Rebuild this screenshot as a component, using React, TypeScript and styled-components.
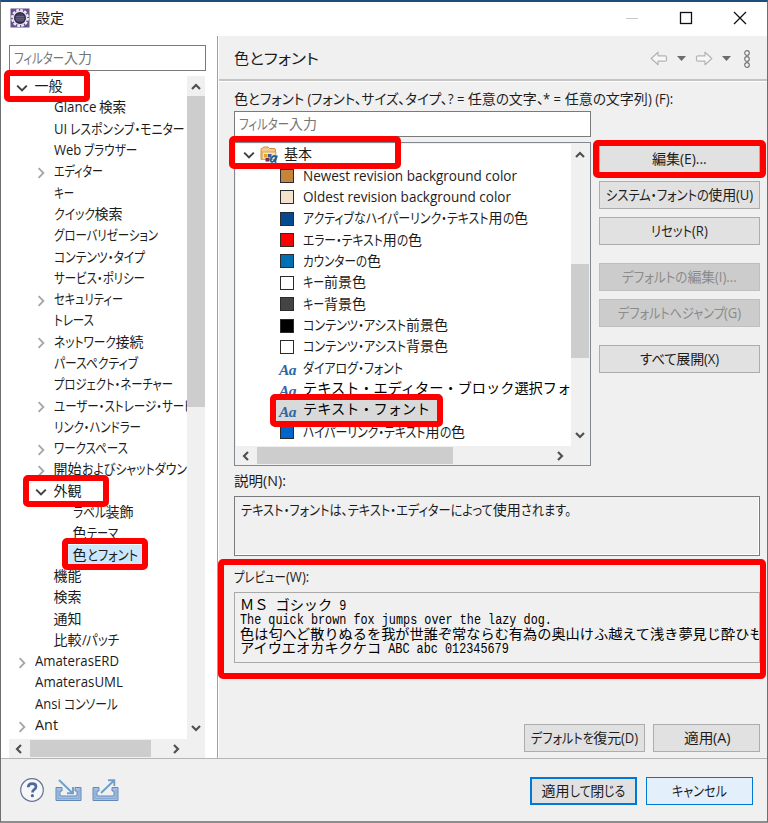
import React, { useLayoutEffect, useRef } from "react";
import styled, { createGlobalStyle, css } from "styled-components";

const Global = createGlobalStyle`
  * { box-sizing: border-box; }
  body { margin: 0; background: #fff; }
`;

const uiFont = `"Open Sans", "Noto Sans CJK JP", sans-serif`;

/* ---------- text ---------- */

const Line = styled.span<{ $size?: number }>`
  display: inline-flex;
  flex: none;
  white-space: pre;
  font-size: ${(p) => p.$size ?? 14}px;
  line-height: 20px;
  margin-bottom: 1px;
  font-feature-settings: "palt";
`;
const Run = styled.span`
  display: block;
  flex: none;
`;
const RunInk = styled.span<{ $latin: boolean }>`
  display: inline-block;
  transform-origin: 0 50%;
  font-size: ${(p) => (p.$latin ? "0.98em" : "1em")};
`;

function Text({ children, w, size }: { children: string; w: number; size?: number }) {
  const ref = useRef<HTMLSpanElement>(null);
  const parts = children.match(/[\u3000-\u30ff]+|[\u0000-\u024f]+|[^\u3000-\u30ff\u0000-\u024f]+/g) ?? [];
  useLayoutEffect(() => {
    const runs = Array.from(ref.current!.children) as HTMLElement[];
    const inks = runs.map((r) => r.firstElementChild as HTMLElement);
    inks.forEach((k) => (k.style.transform = "none"));
    const isKana = parts.map((p) => /^[\u3000-\u30ff]/.test(p));
    const some = isKana.some(Boolean);
    const natural = inks.map((k) => k.getBoundingClientRect().width);
    // Latin beside kana is set slightly condensed
    const base = parts.map((p) => (some && /^[\u0000-\u024f]/.test(p) ? 0.95 : 1));
    const widths = natural.map((x, i) => x * base[i]);
    const flexible = widths.reduce((a, x, i) => a + (!some || isKana[i] ? x : 0), 0);
    const fixed = widths.reduce((a, x) => a + x, 0) - flexible;
    const s = (w - fixed) / flexible;
    runs.forEach((r, i) => {
      const k = !some || isKana[i] ? s : base[i];
      r.style.width = natural[i] * k + "px";
      inks[i].style.transform = `scaleX(${k})`;
    });
  }, [children, w, size]);
  return (
    <Line ref={ref} $size={size}>
      {parts.map((p, i) => (
        <Run key={i}>
          <RunInk $latin={/^[\u0000-\u024f]/.test(p)}>{p}</RunInk>
        </Run>
      ))}
    </Line>
  );
}

/* ---------- window frame ---------- */

const Desktop = styled.div`
  position: relative;
  width: 768px;
  height: 823px;
  overflow: hidden;
  background: #fff;
  border-top: 2px solid #1f4c7c;
  border-left: 1px solid #6f6f6f;
  border-right: 1px solid #6a6f78;
  border-bottom: 2px solid #8d8d8d;
  display: flex;
  flex-direction: column;
  font-family: ${uiFont};
  color: #1c1c1c;
`;
const TitleBar = styled.header`
  flex: none;
  height: 34px;
  display: flex;
  align-items: center;
  padding: 0 20px 2px 9px;
`;
const Caption = styled.div`
  flex: 1;
  padding: 1px 0 0 6px;
  display: flex;
`;
const WindowButtons = styled.div`
  display: flex;
  align-items: center;
  gap: 40px;
`;
const Body = styled.div`
  flex: none;
  height: 722px;
  display: flex;
`;

/* ---------- left side ---------- */

const Side = styled.aside`
  width: 217px;
  flex: none;
  padding: 9px 0 0 8px;
  border-right: 1px solid #a0a0a0;
`;
const Filter = styled.div<{ $w: number }>`
  width: ${(p) => p.$w}px;
  height: 26px;
  border: 1px solid #7a7a7a;
  background: #fff;
  display: flex;
  align-items: center;
  padding: 0 0 0 4px;
  color: #767676;
`;
const Scroller = styled.div<{ $w: number; $h: number }>`
  width: ${(p) => p.$w}px;
  height: ${(p) => p.$h}px;
  display: grid;
  grid-template-columns: minmax(0, 1fr) 18px;
  grid-template-rows: minmax(0, 1fr) 19px;
  background: #f0f0f0;
`;
const SideTree = styled.div`
  margin-top: 5px;
`;
const Rows = styled.div`
  background: #fff;
  overflow: hidden;
`;
const TreeRow = styled.div<{ $depth: number }>`
  height: 21.3px;
  display: flex;
  align-items: center;
  padding-left: ${(p) => 4.5 + p.$depth * 19}px;
`;
const Twisty = styled.span`
  width: 21px;
  flex: none;
  display: flex;
  align-items: center;
  padding: 2px 0 0 2px;
`;
const Picked = styled.span<{ $on?: boolean }>`
  display: flex;
  align-items: center;
  height: 21px;
  ${(p) =>
    p.$on &&
    css`
      background: #cce8ff;
      margin-left: -5px;
      padding: 0 5px;
    `}
`;
const VBar = styled.div<{ $before: number; $thumb: number }>`
  display: flex;
  flex-direction: column;
  align-items: center;
  justify-content: space-between;
  padding: 6px 0;
  background: linear-gradient(#cdcdcd, #cdcdcd) 0 ${(p) => p.$before}px / 18px ${(p) => p.$thumb}px no-repeat #f0f0f0;
`;
const HBar = styled.div<{ $before: number; $thumb: number; $pad: number }>`
  display: flex;
  align-items: center;
  justify-content: space-between;
  padding: 0 ${(p) => p.$pad}px 0 5px;
  background: linear-gradient(#cdcdcd, #cdcdcd) ${(p) => p.$before}px 1px / ${(p) => p.$thumb}px 17px no-repeat #f0f0f0;
`;

type Dir = "up" | "down" | "left" | "right";
const turn: Record<Dir, number> = { down: 0, left: 90, up: 180, right: 270 };
function Chevron({ dir, color = "#505050", size = 10, sw = 2.2 }: { dir: Dir; color?: string; size?: number; sw?: number }) {
  return (
    <svg width={size} height={size} viewBox="0 0 10 10">
      <path d="M1 3 L5 7 L9 3" transform={`rotate(${turn[dir]} 5 5)`} fill="none" stroke={color} strokeWidth={sw} />
    </svg>
  );
}

/* ---------- right side ---------- */

const Page = styled.main`
  flex: 1;
  min-width: 0;
  margin-left: 1px;
  background: #f0f0f0;
  display: flex;
  flex-direction: column;
`;
const PageHead = styled.div`
  flex: none;
  height: 45px;
  border-bottom: 2px solid #c4c4c4;
  box-shadow: 0 1px #fff;
  display: flex;
  align-items: center;
  justify-content: space-between;
  padding: 2px 16px 0 15px;
`;
const PageBody = styled.div`
  padding: 6px 0 0 15px;
`;
const Label = styled.div<{ $h: number; $drop?: number }>`
  height: ${(p) => p.$h}px;
  padding-top: ${(p) => p.$drop ?? 0}px;
  display: flex;
  align-items: center;
`;
const Split = styled.div`
  display: flex;
  gap: 8px;
  height: 330px;
`;
const ColorBox = styled.div`
  margin-top: 5px;
  width: 357px;
  height: 324px;
  border: 1px solid #828790;
  padding: 1px;
`;
const ColorRow = styled.div`
  height: 21.36px;
  display: flex;
  align-items: center;
  padding-left: 43px;
`;
const IconCell = styled.span`
  width: 24px;
  flex: none;
  display: flex;
  align-items: center;
`;
const RootRow = styled(ColorRow)`
  padding-left: 7px;
  gap: 5px;
`;
const Swatch = styled.span<{ $c: string }>`
  width: 14px;
  height: 14px;
  margin-left: 1px;
  border: 1.5px solid #2b2b2b;
  background: ${(p) => p.$c};
`;
const Highlight = styled.span<{ $on?: boolean }>`
  height: 21px;
  display: flex;
  align-items: center;
  flex: none;
  ${(p) =>
    p.$on &&
    css`
      background: #d9d9d9;
      margin-left: -4px;
      padding: 0 8px 0 4px;
    `}
`;
const gothic = css`
  font-family: "Noto Sans CJK JP", sans-serif;
  font-feature-settings: normal;
  font-size: 14.2px;
  line-height: 14.3px;
  white-space: pre;
  color: #000;
`;
const Gothic = styled.span`
  ${gothic}
  padding-bottom: 5px;
`;
const ButtonColumn = styled.div`
  display: flex;
  flex-direction: column;
  gap: 8px;
  padding-top: 8px;
`;
const Button = styled.button<{ $w: number; $kind?: "disabled" | "default" | "hot"; $gap?: number }>`
  width: ${(p) => p.$w}px;
  height: 28px;
  flex: none;
  margin: ${(p) => p.$gap ?? 0}px 0 0;
  padding: 0;
  display: flex;
  align-items: center;
  justify-content: center;
  font-family: inherit;
  color: #1c1c1c;
  background: #e1e1e1;
  border: 1px solid #adadad;
  ${(p) => p.$kind === "disabled" && css`background: #cccccc; border-color: #bfbfbf; color: #8b8b8b;`}
  ${(p) => p.$kind === "default" && css`border: 2px solid #0078d7;`}
  ${(p) => p.$kind === "hot" && css`border-color: #0078d7; background: #e3f0fb;`}
`;
const Description = styled.div`
  width: 526px;
  height: 60px;
  border: 1px solid #7a7a7a;
  box-shadow: inset -1px -1px #fff;
  padding: 1px 6px;
`;
const Preview = styled.div`
  width: 526px;
  height: 71px;
  border: 1px solid #a9a9a9;
  padding: 4px 0 0 5px;
  overflow: hidden;
  display: flex;
  flex-direction: column;
`;
const PreviewLine = styled.div`
  ${gothic}
  flex: none;
  height: 14.4px;
`;
/* Half-width cells: tall, narrow monospace */
const Half = styled.span`
  font-family: "Liberation Mono", monospace;
  font-size: 11.82px;
  line-height: 12px;
  display: inline-block;
  transform: scaleY(1.18);
  transform-origin: 0 76%;
`;
const PageButtons = styled.div`
  display: flex;
  gap: 8px;
  justify-content: flex-end;
  margin-top: 61px;
  padding-right: 7px;
`;
const Footer = styled.footer`
  flex: 1;
  border-top: 1px solid #b5b5b5;
  background: #f0f0f0;
  display: flex;
  align-items: center;
  justify-content: space-between;
  padding: 2px 14px 0 18px;
`;
const Group = styled.div<{ $gap: number }>`
  display: flex;
  align-items: center;
  gap: ${(p) => p.$gap}px;
`;
const FooterIcons = styled(Group)`
  margin-bottom: 2px;
`;
const MenuDots = styled.span`
  display: flex;
  padding-left: 3px;
`;

/* Red frame laid over the dialog */
const Callout = styled.div<{ $x: number; $y: number; $w: number; $h: number }>`
  position: absolute;
  left: ${(p) => p.$x - 1}px;
  top: ${(p) => p.$y - 2}px;
  width: ${(p) => p.$w}px;
  height: ${(p) => p.$h}px;
  border: 6px solid #ff0000;
  border-radius: 5px;
  pointer-events: none;
`;

/* ---------- icons ---------- */

const AppIcon = () => (
  <svg width="20" height="20" viewBox="0 0 20 20">
    <rect x=".5" y=".5" width="19" height="19" fill="#65518f" />
    <circle cx="10" cy="10" r="7.7" fill="none" stroke="#efebf5" strokeWidth="2.6" strokeDasharray="2.7 1.33" />
    <circle cx="10" cy="10" r="6.6" fill="#29263f" stroke="#e6e2ee" strokeWidth="1.2" />
    <circle cx="10" cy="10" r="4.7" fill="#45415d" />
    <path d="M5.7 8.5h8.6M5.4 10.3h9.2M5.8 12.1h8.4" stroke="#777391" strokeWidth=".7" />
  </svg>
);
const FolderIcon = () => (
  <svg width="19" height="18" viewBox="0 0 19 18">
    <path d="M1 13.5V3.5Q1 2 2.5 2L4 1h4l1.5 1.5H14Q15.5 2.5 15.5 4v9.5Z" fill="#f3c98b" stroke="#c98f45" />
    <path d="M2.2 13.5V6H16L15 13.5Z" fill="#fbe2b5" stroke="#d9a45c" />
    <path d="M4 8h3.5v3.5H4z" fill="#e9a520" />
    <path d="M8 8h3.5v3.5H8z" fill="#3f5d94" />
    <path d="M5.5 12h4v3.5h-4z" fill="#7f2d3f" />
    <path d="M17 9.5 15.2 15.4q-.2 1 1.2.6M16.2 11.2q-1-1.8-3.2-.8-2.3 1.4-2.3 4 .3 2 2.2 1.3 1.6-.7 2.6-3" fill="none" stroke="#1d5fa0" strokeWidth="1.8" />
  </svg>
);
const FontGlyph = styled.span`
  font: italic bold 15.5px/16px "Liberation Serif", serif;
  color: #2f66a3;
  letter-spacing: -0.6px;
  padding-top: 3px;
`;
const NavArrow = ({ flip }: { flip?: boolean }) => (
  <svg width="18" height="15" viewBox="0 0 18 15">
    <path
      d="M1.2 7.5 8 1.2V4.8h7q1.5 0 1.5 1.2v3q0 1.2-1.5 1.2H8v3.6Z"
      transform={flip ? "translate(18 0) scale(-1 1)" : undefined}
      fill="#f7f7f7"
      stroke="#b4b4b4"
      strokeWidth="1.2"
      strokeLinejoin="round"
    />
  </svg>
);
const Caret = () => (
  <svg width="9" height="5" viewBox="0 0 9 5">
    <path d="M0 0h9L4.5 5Z" fill="#6c6c6c" />
  </svg>
);
const Dots = () => (
  <svg width="8" height="18" viewBox="0 0 8 18">
    {[3, 9, 15].map((y) => (
      <circle key={y} cx="4" cy={y} r="2.3" fill="#f6f6f6" stroke="#777" strokeWidth="1.2" />
    ))}
  </svg>
);
const HelpIcon = () => (
  <svg width="26" height="26" viewBox="0 0 26 26">
    <circle cx="13" cy="13" r="11.3" fill="#f5f7fa" stroke="#66758f" strokeWidth="1.2" />
    <path d="M9.2 10.2q.2-3.6 4-3.6 3.8 0 3.8 3.1 0 1.7-1.9 2.9-1.6 1-1.6 2.8" fill="none" stroke="#4f6a97" strokeWidth="2.7" />
    <circle cx="13.4" cy="18.7" r="1.6" fill="#4f6a97" />
  </svg>
);
const TrayIcon = ({ out }: { out?: boolean }) => (
  <svg width="27" height="24" viewBox="0 0 27 24">
    <path d="M1 9.5H7V13H5V18H22V13H20V9.5H26V22.5H1Z" fill="#a5c1e2" stroke="#6288b9" strokeWidth="1" />
    <path d="M3 11.5V20.5H24V11.5" fill="none" stroke="#86a7d1" />
    {out ? (
      <path d="M9 15 21.5 3M16 2.2h6.3V8" fill="none" stroke="#6f9fc9" strokeWidth="1.9" />
    ) : (
      <path d="M4 2 17 14.5M18 9v6.3h-6" fill="none" stroke="#6f9fc9" strokeWidth="1.9" />
    )}
  </svg>
);

/* ---------- data ---------- */

type Node = [label: string, width: number, depth: number, state?: "open" | "closed", selected?: boolean];
const nodes: Node[] = [
  ["一般", 28, 0, "open"],
  ["Glance 検索", 73, 1],
  ["UI レスポンシブ・モニター", 131, 1],
  ["Web ブラウザー", 84, 1],
  ["エディター", 49, 1, "closed"],
  ["キー", 20, 1],
  ["クイック検索", 69, 1],
  ["グローバリゼーション", 104, 1],
  ["コンテンツ・タイプ", 91, 1],
  ["サービス・ポリシー", 91, 1],
  ["セキュリティー", 69, 1, "closed"],
  ["トレース", 40, 1],
  ["ネットワーク接続", 90, 1, "closed"],
  ["パースペクティブ", 84, 1],
  ["プロジェクト・ネーチャー", 119, 1],
  ["ユーザー・ストレージ・サービス", 151, 1, "closed"],
  ["リンク・ハンドラー", 87, 1],
  ["ワークスペース", 74, 1, "closed"],
  ["開始およびシャットダウン", 133, 1, "closed"],
  ["外観", 28, 1, "open"],
  ["ラベル装飾", 61, 2],
  ["色テーマ", 45, 2],
  ["色とフォント", 65, 2, undefined, true],
  ["機能", 28, 1],
  ["検索", 28, 1],
  ["通知", 28, 1],
  ["比較/パッチ", 66, 1],
  ["AmaterasERD", 84, 0, "closed"],
  ["AmaterasUML", 88, 0],
  ["Ansi コンソール", 83, 0],
  ["Ant", 23, 0, "closed"],
];

type Def = { label: string; w?: number; color?: string; selected?: boolean };
const defs: Def[] = [
  { label: "Newest revision background color", w: 214, color: "#c4843b" },
  { label: "Oldest revision background color", w: 208, color: "#f3e2cd" },
  { label: "アクティブなハイパーリンク・テキスト用の色", w: 225, color: "#034a91" },
  { label: "エラー・テキスト用の色", w: 119, color: "#ff0000" },
  { label: "カウンターの色", w: 78, color: "#0070b4" },
  { label: "キー前景色", w: 63, color: "#ffffff" },
  { label: "キー背景色", w: 63, color: "#444444" },
  { label: "コンテンツ・アシスト前景色", w: 145, color: "#000000" },
  { label: "コンテンツ・アシスト背景色", w: 145, color: "#ffffff" },
  { label: "ダイアログ・フォント", w: 100 },
  { label: "テキスト・エディター・ブロック選択フォント" },
  { label: "テキスト・フォント", selected: true },
  { label: "ハイパーリンク・テキスト用の色", w: 162, color: "#0066cc" },
];

const frames = [
  [4, 70, 86, 32],
  [23, 475, 86, 32],
  [62, 538, 86, 32],
  [229, 136, 172, 33],
  [593, 140, 173, 38],
  [270, 394, 173, 33],
  [218, 559, 548, 120],
];

export default function App() {
  return (
    <Desktop>
      <Global />
      <TitleBar>
        <AppIcon />
        <Caption>
          <Text w={28}>設定</Text>
        </Caption>
        <WindowButtons>
          <svg width="14" height="14"><path d="M1 7.5h12" stroke="#c8c8c8" /></svg>
          <svg width="14" height="14"><rect x="1.5" y="1.5" width="11" height="11" fill="none" stroke="#111" strokeWidth="1.3" /></svg>
          <svg width="14" height="14"><path d="M1 1 13 13M13 1 1 13" stroke="#111" strokeWidth="1.3" /></svg>
        </WindowButtons>
      </TitleBar>
      <Body>
        <Side>
          <Filter $w={197}>
            <Text w={78}>フィルター入力</Text>
          </Filter>
          <SideTree>
            <Scroller $w={196} $h={682}>
              <Rows>
                {nodes.map(([label, w, depth, state, selected]) => (
                  <TreeRow key={label} $depth={depth}>
                    <Twisty>
                      {state === "open" && <Chevron dir="down" size={12} sw={1.7} color="#404040" />}
                      {state === "closed" && <Chevron dir="right" size={12} sw={1.5} color="#a6a6a6" />}
                    </Twisty>
                    <Picked $on={selected}>
                      <Text w={w}>{label}</Text>
                    </Picked>
                  </TreeRow>
                ))}
              </Rows>
              <VBar $before={20} $thumb={311}>
                <Chevron dir="up" />
                <Chevron dir="down" />
              </VBar>
              <HBar $before={21} $thumb={121} $pad={6}>
                <Chevron dir="left" />
                <Chevron dir="right" />
              </HBar>
            </Scroller>
          </SideTree>
        </Side>
        <Page>
          <PageHead>
            <Text w={85} size={15}>色とフォント</Text>
            <Group $gap={9}>
              <NavArrow />
              <Caret />
              <NavArrow flip />
              <Caret />
              <MenuDots><Dots /></MenuDots>
            </Group>
          </PageHead>
          <PageBody>
            <Label $h={24}>
              <Text w={439}>色とフォント (フォント、サイズ、タイプ、? = 任意の文字、* = 任意の文字列) (F):</Text>
            </Label>
            <Filter $w={357}>
              <Text w={78}>フィルター入力</Text>
            </Filter>
            <Split>
              <ColorBox>
                <Scroller $w={353} $h={321}>
                  <Rows>
                    <RootRow>
                      <Chevron dir="down" size={12} sw={1.7} color="#404040" />
                      <FolderIcon />
                      <Text w={28}>基本</Text>
                    </RootRow>
                    {defs.map((d) => (
                      <ColorRow key={d.label}>
                        <Highlight $on={d.selected}>
                          <IconCell>{d.color ? <Swatch $c={d.color} /> : <FontGlyph>Aa</FontGlyph>}</IconCell>
                          {d.w ? <Text w={d.w}>{d.label}</Text> : <Gothic>{d.label}</Gothic>}
                        </Highlight>
                      </ColorRow>
                    ))}
                  </Rows>
                  <VBar $before={120} $thumb={94}>
                    <Chevron dir="up" />
                    <Chevron dir="down" />
                  </VBar>
                  <HBar $before={21} $thumb={196} $pad={6}>
                    <Chevron dir="left" />
                    <Chevron dir="right" />
                  </HBar>
                </Scroller>
              </ColorBox>
              <ButtonColumn>
                <Button $w={161}><Text w={55}>編集(E)...</Text></Button>
                <Button $w={161}><Text w={148}>システム・フォントの使用(U)</Text></Button>
                <Button $w={161}><Text w={57}>リセット(R)</Text></Button>
                <Button $w={161} $kind="disabled" $gap={10}><Text w={115}>デフォルトの編集(I)...</Text></Button>
                <Button $w={161} $kind="disabled"><Text w={124}>デフォルトへジャンプ(G)</Text></Button>
                <Button $w={161} $gap={10}><Text w={80}>すべて展開(X)</Text></Button>
              </ButtonColumn>
            </Split>
            <Label $h={29}><Text w={52}>説明(N):</Text></Label>
            <Description>
              <Text w={330}>テキスト・フォントは、テキスト・エディターによって使用されます。</Text>
            </Description>
            <Label $h={36} $drop={6}><Text w={75}>プレビュー(W):</Text></Label>
            <Preview>
              <PreviewLine>ＭＳ<Half> </Half>ゴシック<Half> 9</Half></PreviewLine>
              <PreviewLine><Half>The quick brown fox jumps over the lazy dog.</Half></PreviewLine>
              <PreviewLine>色は匂へど散りぬるを我が世誰ぞ常ならむ有為の奥山けふ越えて浅き夢見じ酔ひもせず</PreviewLine>
              <PreviewLine>アイウエオカキクケコ<Half> ABC abc 012345679</Half></PreviewLine>
            </Preview>
            <PageButtons>
              <Button $w={121}><Text w={108}>デフォルトを復元(D)</Text></Button>
              <Button $w={107}><Text w={47}>適用(A)</Text></Button>
            </PageButtons>
          </PageBody>
        </Page>
      </Body>
      <Footer>
        <FooterIcons $gap={10}>
          <HelpIcon />
          <TrayIcon />
          <TrayIcon out />
        </FooterIcons>
        <Group $gap={9}>
          <Button $w={107} $kind="default"><Text w={84}>適用して閉じる</Text></Button>
          <Button $w={107} $kind="hot"><Text w={55}>キャンセル</Text></Button>
        </Group>
      </Footer>
      {frames.map(([x, y, w, h], i) => (
        <Callout key={i} $x={x} $y={y} $w={w} $h={h} />
      ))}
    </Desktop>
  );
}
